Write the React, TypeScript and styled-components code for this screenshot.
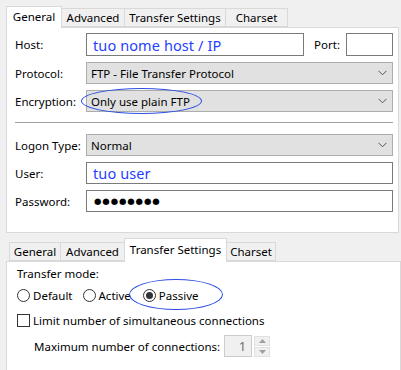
import React from "react";
import styled, { createGlobalStyle } from "styled-components";

const Global = createGlobalStyle`
  html, body { margin: 0; padding: 0; background: #f0f0f0; }
  body { font-family: "Noto Sans", "Liberation Sans", sans-serif; font-size: 11.5px; color: #000; }
  * { box-sizing: border-box; }
`;

const Page = styled.div`
  width: 401px;
  height: 370px;
  overflow: hidden;
  background: #f0f0f0;
  display: flex;
  flex-direction: column;
`;

const Section = styled.div<{ $padTop: number; $padLeft: number; $right: number }>`
  padding: ${(p) => p.$padTop}px ${(p) => p.$right}px 0 ${(p) => p.$padLeft}px;
  display: flex;
  flex-direction: column;
`;

const TabStrip = styled.div<{ $indent: number }>`
  display: flex;
  align-items: flex-end;
  padding-left: ${(p) => p.$indent}px;
  height: ${(p) => (p.$indent ? 24 : 22)}px;
  position: relative;
  z-index: 1;
`;

const Tab = styled.div<{ $active?: boolean; $w: number }>`
  width: ${(p) => p.$w}px;
  height: ${(p) => (p.$active ? "100%" : "19px")};
  margin-bottom: ${(p) => (p.$active ? "-1px" : "0")};
  background: ${(p) => (p.$active ? "#fff" : "#f0f0f0")};
  border: 1px solid #d9d9d9;
  border-bottom: ${(p) => (p.$active ? "none" : "1px solid #d9d9d9")};
  margin-left: -1px;
  display: flex;
  align-items: center;
  justify-content: center;
  padding-bottom: ${(p) => (p.$active ? "2px" : "0")};
  &:first-child { margin-left: 0; }
`;

const Panel = styled.div<{ $h: number }>`
  background: #fff;
  border: 1px solid #d9d9d9;
  height: ${(p) => p.$h}px;
  position: relative;
`;

const Form = styled.div`
  display: grid;
  grid-template-columns: 71px 1fr;
  row-gap: 6px;
  padding: 5px 5px 0 8px;
  align-items: center;
`;

const Label = styled.div`
  white-space: nowrap;
`;

const HostRow = styled.div`
  display: flex;
  align-items: center;
`;

const TextBox = styled.div<{ $w?: number; $h?: number }>`
  ${(p) => (p.$w ? `width: ${p.$w}px; flex: none;` : "flex: 1;")}
  height: ${(p) => p.$h ?? 22}px;
  border: 1px solid #7a7a7a;
  background: #fff;
  display: flex;
  align-items: center;
  padding-left: 6px;
`;

const BlueText = styled.span`
  color: #1f3fff;
  font-size: 14.5px;
  letter-spacing: 0.1px;
`;

const Dots = styled.span`
  font-size: 8.5px;
  letter-spacing: 0.9px;
  font-family: "DejaVu Sans", sans-serif;
  padding-left: 1px;
`;

const PortLabel = styled.div`
  margin: 0 6px 0 10px;
`;

const Select = styled.div`
  height: 22px;
  border: 1px solid #adadad;
  background: #e1e1e1;
  display: flex;
  align-items: center;
  justify-content: space-between;
  padding: 0 5px 0 4px;
  position: relative;
`;

const Separator = styled.div`
  grid-column: 1 / 3;
  height: 1px;
  background: #a0a0a0;
  margin: 4px 0 5px;
`;

const Ellipse = styled.div<{ $l: number; $t: number; $w: number; $h: number }>`
  position: absolute;
  left: ${(p) => p.$l}px;
  top: ${(p) => p.$t}px;
  width: ${(p) => p.$w}px;
  height: ${(p) => p.$h}px;
  border: 1.5px solid #2b4fe0;
  border-radius: 50%;
  pointer-events: none;
`;

const Chevron = () => (
  <svg width="9" height="6" viewBox="0 0 9 6">
    <path d="M0.5 0.8 L4.5 4.8 L8.5 0.8" fill="none" stroke="#555" strokeWidth="1" />
  </svg>
);

const TransferBody = styled.div`
  padding: 4px 0 0 10px;
  display: flex;
  flex-direction: column;
`;

const RadioRow = styled.div`
  display: flex;
  align-items: center;
  margin-top: 5px;
  height: 18px;
`;

const RadioItem = styled.label<{ $gap: number }>`
  display: flex;
  align-items: center;
  margin-right: ${(p) => p.$gap}px;
`;

const RadioCircle = styled.span<{ $on?: boolean }>`
  width: 13px;
  height: 13px;
  border-radius: 50%;
  border: 1px solid #333;
  background: #fff;
  margin-right: 3px;
  display: flex;
  align-items: center;
  justify-content: center;
  &::after {
    content: "";
    display: ${(p) => (p.$on ? "block" : "none")};
    width: 7px;
    height: 7px;
    border-radius: 50%;
    background: #333;
  }
`;

const CheckRow = styled.div`
  display: flex;
  align-items: center;
  margin-top: 8px;
  height: 16px;
`;

const CheckBox = styled.span`
  width: 13px;
  height: 13px;
  border: 1px solid #333;
  background: #fff;
  margin-right: 3px;
`;

const MaxRow = styled.div`
  display: flex;
  align-items: center;
  margin-top: 7px;
  padding-left: 17px;
`;

const SpinBox = styled.div`
  width: 28px;
  height: 22px;
  border: 1px solid #ccc;
  background: #f0f0f0;
  color: #6d6d6d;
  display: flex;
  align-items: center;
  justify-content: flex-end;
  padding-right: 5px;
  margin-left: 4px;
  font-size: 13px;
`;

const SpinButtons = styled.div`
  display: flex;
  flex-direction: column;
  gap: 1px;
  margin-left: 2px;
`;

const SpinBtn = styled.div`
  width: 16px;
  height: 10px;
  background: #f0f0f0;
  border: 1px solid #e0e0e0;
  display: flex;
  align-items: center;
  justify-content: center;
`;

const Tri = ({ up }: { up?: boolean }) => (
  <svg width="7" height="4" viewBox="0 0 7 4">
    <path d={up ? "M0 4 L3.5 0 L7 4 Z" : "M0 0 L3.5 4 L7 0 Z"} fill="#a0a0a0" />
  </svg>
);

export default function App() {
  return (
    <Page>
      <Global />
      <Section $padTop={5} $padLeft={6} $right={2}>
        <TabStrip $indent={0}>
          <Tab $active $w={56}>General</Tab>
          <Tab $w={64}>Advanced</Tab>
          <Tab $w={102}>Transfer Settings</Tab>
          <Tab $w={63}>Charset</Tab>
        </TabStrip>
        <Panel $h={206}>
          <Form>
            <Label>Host:</Label>
            <HostRow>
              <TextBox $h={23}>
                <BlueText>tuo nome host / IP</BlueText>
              </TextBox>
              <PortLabel>Port:</PortLabel>
              <TextBox $w={47} $h={23} />
            </HostRow>
            <Label>Protocol:</Label>
            <Select>
              <span>FTP - File Transfer Protocol</span>
              <Chevron />
            </Select>
            <Label>Encryption:</Label>
            <Select>
              <span>Only use plain FTP</span>
              <Chevron />
            </Select>
            <Separator />
            <Label>Logon Type:</Label>
            <Select>
              <span>Normal</span>
              <Chevron />
            </Select>
            <Label>User:</Label>
            <TextBox>
              <BlueText>tuo user</BlueText>
            </TextBox>
            <Label>Password:</Label>
            <TextBox>
              <Dots>●●●●●●●●</Dots>
            </TextBox>
          </Form>
          <Ellipse $l={74} $t={60} $w={121} $h={26} />
        </Panel>
      </Section>
      <Section $padTop={4} $padLeft={6} $right={0}>
        <TabStrip $indent={3}>
          <Tab $w={52}>General</Tab>
          <Tab $w={65}>Advanced</Tab>
          <Tab $active $w={103}>Transfer Settings</Tab>
          <Tab $w={50}>Charset</Tab>
        </TabStrip>
        <Panel $h={120}>
          <TransferBody>
            <div>Transfer mode:</div>
            <RadioRow>
              <RadioItem $gap={10}>
                <RadioCircle />
                Default
              </RadioItem>
              <RadioItem $gap={12}>
                <RadioCircle />
                Active
              </RadioItem>
              <RadioItem $gap={0}>
                <RadioCircle $on />
                Passive
              </RadioItem>
            </RadioRow>
            <CheckRow>
              <CheckBox />
              Limit number of simultaneous connections
            </CheckRow>
            <MaxRow>
              Maximum number of connections:
              <SpinBox>1</SpinBox>
              <SpinButtons>
                <SpinBtn><Tri up /></SpinBtn>
                <SpinBtn><Tri /></SpinBtn>
              </SpinButtons>
            </MaxRow>
          </TransferBody>
          <Ellipse $l={122} $t={17} $w={94} $h={31} />
        </Panel>
      </Section>
    </Page>
  );
}
